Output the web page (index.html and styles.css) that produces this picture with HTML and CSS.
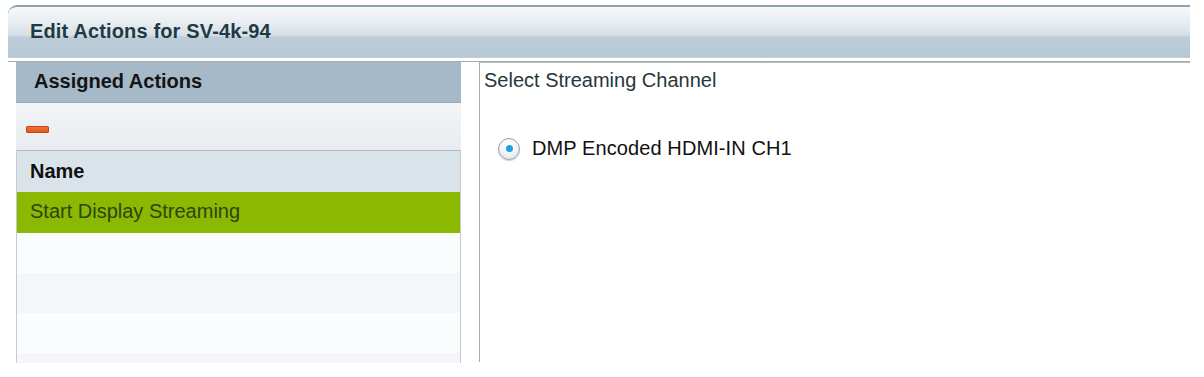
FILE: index.html
```html
<!DOCTYPE html>
<html>
<head>
<meta charset="utf-8">
<link rel="stylesheet" href="styles.css">
</head>
<body>
<div class="frame">
  <div class="header"><span class="title">Edit Actions for SV-4k-94</span></div>
  <div class="divider"></div>
  <div class="content">
    <div class="left">
      <div class="panel-title">Assigned Actions</div>
      <div class="toolbar"><span class="minus"></span></div>
      <div class="table">
        <div class="row head">Name</div>
        <div class="row selected">Start Display Streaming</div>
        <div class="rows">
          <div class="row empty"></div>
          <div class="row empty alt"></div>
          <div class="row empty"></div>
          <div class="row empty alt"></div>
        </div>
      </div>
    </div>
    <div class="right">
      <div class="right-title">Select Streaming Channel</div>
      <label class="option">
        <span class="radio"><span class="dot"></span></span>
        <span class="option-label">DMP Encoded HDMI-IN CH1</span>
      </label>
    </div>
  </div>
</div>
</body>
</html>
```
FILE: styles.css
```css
html, body {
  margin: 0;
  padding: 0;
  background: #ffffff;
}
body {
  font-family: "Liberation Sans", Arial, sans-serif;
  width: 1204px;
  height: 377px;
  overflow: hidden;
}
.frame {
  padding: 5px 0 0 8px;
  width: 1182px;
}
.header {
  height: 51px;
  border-top: 2px solid #8ea3b1;
  border-radius: 9px 0 0 0;
  background: linear-gradient(to bottom, #f6f8fa 0px, #e9eef2 14px, #d9e1e7 27px, #d2dce3 29px, #bccdd9 30px, #b6c8d4 50px, #c8d5de 51px);
  display: flex;
  align-items: center;
  padding-left: 22px;
}
.title {
  font-weight: bold;
  font-size: 20px;
  letter-spacing: 0.15px;
  color: #1d3a45;
  position: relative;
  top: -1px;
}
.divider {
  margin-top: 3px;
  height: 1px;
  background: #a2aeb6;
}
.content {
  display: flex;
  padding-left: 8px;
  gap: 18px;
}
.left {
  width: 445px;
  flex: none;
}
.panel-title {
  height: 40px;
  line-height: 39px;
  background: #a5b9c8;
  border-bottom: 1px solid #93a6b4;
  padding-left: 18px;
  font-weight: bold;
  font-size: 20px;
  color: #141414;
}
.toolbar {
  height: 47px;
  background: linear-gradient(to bottom, #f3f5f7, #e8ecf0);
  display: flex;
  align-items: center;
  padding-left: 10px;
  box-sizing: border-box;
  padding-top: 6px;
}
.minus {
  display: block;
  width: 23px;
  height: 7px;
  border-radius: 2px;
  background: linear-gradient(to bottom, #f07a3a, #e0501a);
  box-shadow: inset 0 0 0 1px #c84412;
}
.table {
  border-left: 1px solid #c5cace;
  border-right: 1px solid #c5cace;
  border-top: 1px solid #b4bcc3;
}
.row {
  padding-left: 13px;
  font-size: 20px;
  box-sizing: border-box;
}
.head {
  height: 41px;
  line-height: 40px;
  background: #dbe3ea;
  font-weight: bold;
  color: #111111;
}
.selected {
  height: 41px;
  line-height: 38px;
  background: #8bb800;
  color: #2c4510;
}
.rows {
  height: 130px;
  overflow: hidden;
}
.empty {
  height: 40px;
  background: #fbfcfd;
}
.empty.alt {
  background: #f4f6f9;
}
.right {
  flex: 1;
  height: 300px;
  border-left: 1px solid #a3abb1;
  border-top: 1px solid #b3bbc1;
  box-sizing: border-box;
}
.right-title {
  height: 34px;
  line-height: 34px;
  padding-left: 4px;
  font-size: 20px;
  color: #27363d;
}
.option {
  display: flex;
  align-items: center;
  margin-top: 40px;
  padding-left: 18px;
  gap: 12px;
}
.radio {
  width: 20px;
  height: 20px;
  border-radius: 50%;
  border: 1px solid #9aa3aa;
  background: radial-gradient(circle at 50% 35%, #ffffff 0%, #f2f4f6 50%, #d6dbe0 100%);
  box-shadow: 0 1px 1px rgba(0,0,0,0.18);
  display: flex;
  align-items: center;
  justify-content: center;
  flex: none;
}
.dot {
  width: 7px;
  height: 7px;
  border-radius: 50%;
  background: #1f9fe2;
}
.option-label {
  font-size: 20px;
  letter-spacing: 0.1px;
  color: #111111;
}
```
